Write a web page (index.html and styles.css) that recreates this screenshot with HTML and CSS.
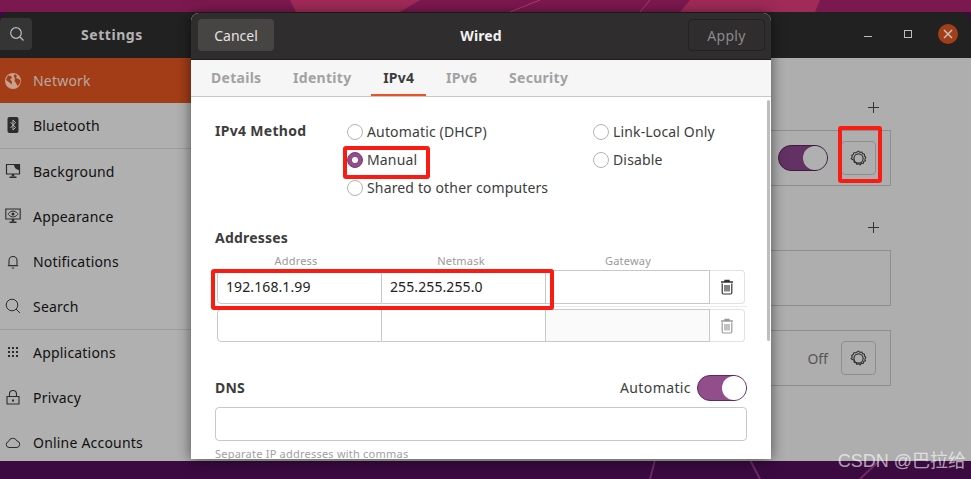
FILE: index.html
```html
<!DOCTYPE html>
<html lang="en">
<head>
<meta charset="utf-8">
<title>Settings - Wired</title>
<link rel="stylesheet" href="styles.css">
</head>
<body>
<svg width="0" height="0" class="defs">
  <symbol id="gear" viewBox="0 0 20 20">
    <circle cx="10" cy="10" r="5.400" fill="none" stroke="currentColor" stroke-width="1.400"/>
    <path d="M10 1.300l1.700 1.500 2.200-.5 1 2 2.200.6-.1 2.200 1.700 1.500-1.200 1.900.7 2.100-2 1-.6 2.200-2.200-.1-1.400 1.800-1.900-1.300-2.100.7-1-2-2.200-.6.1-2.200L1.300 10.400l1.300-1.900-.7-2.100 2-1 .6-2.200 2.200.1z" fill="none" stroke="currentColor" stroke-width="1.300" stroke-linejoin="round"/>
  </symbol>
  <symbol id="trash" viewBox="0 0 14 16">
    <path d="M1 3h12M5 3V1.500h4V3" fill="none" stroke="currentColor" stroke-width="1.400"/>
    <path d="M2.200 4.500v9.300c0 .8.500 1.200 1.200 1.200h7.200c.7 0 1.200-.4 1.200-1.200V4.500" fill="none" stroke="currentColor" stroke-width="1.200"/>
    <path d="M5 6v6.500M7 6v6.500M9 6v6.500" stroke="currentColor" stroke-width="1.200"/>
  </symbol>
  <symbol id="plus" viewBox="0 0 11 11">
    <path d="M5.500 0v11M0 5.500h11" stroke="currentColor" stroke-width="1"/>
  </symbol>
</svg>

<svg class="wallpaper" viewBox="0 0 971 479" preserveAspectRatio="none" aria-hidden="true">
  <rect width="971" height="12" fill="#7c1850"/>
  <path d="M290 0H420L400 12H296zM690 0H820L815 12H680z" fill="#a02a58"/>
  <path d="M540 0L510 12M650 0L640 12" stroke="#b23a68" stroke-width="1"/>
  <rect y="460" width="971" height="19" fill="#3a0a40"/>
  <path d="M650 479L655 460M760 479L750 460M860 479L880 460" stroke="#6a2a68" stroke-width="2"/>
</svg>

<section class="settings">
  <header class="settings-bar">
    <div class="bar-left">
      <button class="search-btn" type="button">
        <svg width="16" height="16" viewBox="0 0 16 16"><circle cx="7" cy="7" r="5.300" fill="none" stroke="currentColor" stroke-width="1.200"/><path d="M11 11l3.500 3.500" stroke="currentColor" stroke-width="1.200"/></svg>
      </button>
      <span class="bar-title">Settings</span>
    </div>
    <div class="win-controls">
      <span class="win-min"></span>
      <span class="win-max"></span>
      <span class="win-close">
        <svg width="10" height="10" viewBox="0 0 10 10"><path d="M1 1l8 8M9 1l-8 8" stroke="currentColor" stroke-width="1.500"/></svg>
      </span>
    </div>
  </header>
  <div class="settings-body">
    <nav class="sidebar">
      <a class="nav-row is-selected">
        <svg class="nav-icon" viewBox="0 0 16 16"><circle cx="8" cy="8" r="8" fill="currentColor"/><path d="M3 2.500l3 .5 1 2-2 1.500 2 2-.5 3L4 9 1 7zM10 1l2 2-1 2 3 1 1.500 2-1 3-2 2-1.500-3-1.500-2 .5-2.500-1.500-2.500z" fill="#a33d17"/></svg>
        <span>Network</span>
      </a>
      <a class="nav-row nav-group-end">
        <svg class="nav-icon" viewBox="0 0 16 16"><rect x="2.500" y="0" width="11" height="16" rx="2" fill="currentColor"/><path d="M5.500 5l5 5.500L8 13V3l2.500 2.500-5 5.500" fill="none" stroke="#b0b0b0" stroke-width="1"/></svg>
        <span>Bluetooth</span>
      </a>
      <a class="nav-row">
        <svg class="nav-icon" viewBox="0 0 16 16"><path d="M1.500 1.500h13v9.500h-13z" fill="none" stroke="currentColor" stroke-width="1.200"/><path d="M9 1.500h5.500V7C11.500 7 9 4.500 9 1.500zM6.800 11h2.400v2.200H6.800zM4.500 13.500h7V15h-7z" fill="currentColor"/></svg>
        <span>Background</span>
      </a>
      <a class="nav-row">
        <svg class="nav-icon" viewBox="0 0 16 16"><path d="M.800 1h14.400v10H.800z" fill="none" stroke="currentColor" stroke-width="1.100"/><path d="M3 6s2-3 5-3 5 3 5 3-2 3-5 3-5-3-5-3z" fill="none" stroke="currentColor"/><circle cx="8" cy="6" r="1.500" fill="currentColor"/><path d="M6.800 11h2.400v2.200H6.800zM4.500 13.500h7V15h-7z" fill="currentColor"/></svg>
        <span>Appearance</span>
      </a>
      <a class="nav-row">
        <svg class="nav-icon" viewBox="0 0 16 16"><path d="M4 11.500V6.500a4 4 0 0 1 8 0v5zM2.800 11.800h10.400M6.800 14h2.400" fill="none" stroke="currentColor" stroke-width="1.100"/></svg>
        <span>Notifications</span>
      </a>
      <a class="nav-row nav-group-end">
        <svg class="nav-icon" viewBox="0 0 16 16"><circle cx="7" cy="7" r="5.800" fill="none" stroke="currentColor" stroke-width="1"/><path d="M11 11l4 4" stroke="currentColor" stroke-width="1"/></svg>
        <span>Search</span>
      </a>
      <a class="nav-row">
        <svg class="nav-icon" viewBox="0 0 16 16" fill="currentColor"><rect x="3" y="3" width="2" height="2"/><rect x="7" y="3" width="2" height="2"/><rect x="11" y="3" width="2" height="2"/><rect x="3" y="7" width="2" height="2"/><rect x="7" y="7" width="2" height="2"/><rect x="11" y="7" width="2" height="2"/><rect x="3" y="11" width="2" height="2"/><rect x="7" y="11" width="2" height="2"/><rect x="11" y="11" width="2" height="2"/></svg>
        <span>Applications</span>
      </a>
      <a class="nav-row">
        <svg class="nav-icon" viewBox="0 0 16 16"><path d="M2 7.500h12V15H2zM4.500 7.500V5a3.500 3.500 0 0 1 7 0v2.500" fill="none" stroke="currentColor" stroke-width="1.100"/><rect x="7" y="10.500" width="2" height="2" fill="currentColor"/></svg>
        <span>Privacy</span>
      </a>
      <a class="nav-row">
        <svg class="nav-icon" viewBox="0 0 16 16"><path d="M4 12.500a3 3 0 0 1-.5-5.900 4.500 4.500 0 0 1 8.500-.6 3.300 3.300 0 0 1 0 6.500z" fill="none" stroke="currentColor" stroke-width="1"/></svg>
        <span>Online Accounts</span>
      </a>
    </nav>
    <main class="net-panel">
      <svg class="panel-add" width="11" height="11"><use href="#plus"/></svg>
      <div class="panel-card">
        <span class="dim-toggle"><span class="dim-thumb"></span></span>
        <span class="dim-gear"><svg width="17" height="17"><use href="#gear"/></svg></span>
      </div>
      <svg class="panel-add panel-add-second" width="11" height="11"><use href="#plus"/></svg>
      <div class="panel-card panel-card-empty"></div>
      <div class="panel-card">
        <span class="off-label">Off</span>
        <span class="dim-gear"><svg width="17" height="17"><use href="#gear"/></svg></span>
      </div>
    </main>
  </div>
</section>

<section class="dialog">
  <header class="dialog-bar">
    <button class="btn-cancel" type="button">Cancel</button>
    <span class="dialog-title">Wired</span>
    <button class="btn-apply" type="button">Apply</button>
  </header>
  <div class="tabs">
    <span class="tab">Details</span>
    <span class="tab">Identity</span>
    <span class="tab is-active">IPv4</span>
    <span class="tab">IPv6</span>
    <span class="tab">Security</span>
  </div>
  <div class="dialog-content">
    <div class="method">
      <div class="section-title method-title">IPv4 Method</div>
      <div class="radio-col">
        <label class="radio"><i class="dot"></i>Automatic (DHCP)</label>
        <label class="radio"><i class="dot is-on"></i>Manual</label>
        <label class="radio"><i class="dot"></i>Shared to other computers</label>
      </div>
      <div class="radio-col">
        <label class="radio"><i class="dot"></i>Link-Local Only</label>
        <label class="radio"><i class="dot"></i>Disable</label>
      </div>
    </div>

    <div class="section-title addr-title">Addresses</div>
    <div class="addr-heads">
      <span>Address</span><span>Netmask</span><span>Gateway</span>
    </div>
    <div class="addr-row">
      <span class="cell cell-first">192.168.1.99</span>
      <span class="cell">255.255.255.0</span>
      <span class="cell"></span>
      <span class="cell-del"><svg width="14" height="16"><use href="#trash"/></svg></span>
    </div>
    <div class="addr-sep"></div>
    <div class="addr-row">
      <span class="cell cell-first"></span>
      <span class="cell"></span>
      <span class="cell is-disabled"></span>
      <span class="cell-del is-faded"><svg width="14" height="16"><use href="#trash"/></svg></span>
    </div>

    <div class="dns-head">
      <span class="section-title">DNS</span>
      <span class="dns-auto"><span class="dns-auto-label">Automatic</span><span class="toggle"><span class="thumb"></span></span></span>
    </div>
    <div class="dns-input"></div>
    <div class="hint">Separate IP addresses with commas</div>
  </div>
  <div class="scrollbar"></div>
</section>

<div class="mark mark-gear"></div>
<div class="mark mark-manual"></div>
<div class="mark mark-addr"></div>
<div class="watermark">CSDN @巴拉给</div>
</body>
</html>
```
FILE: styles.css
```css
* { box-sizing: border-box; }
html, body { margin: 0; padding: 0; }
body {
  position: relative;
  width: 971px;
  height: 479px;
  overflow: hidden;
  background: #3a0a40;
  font-family: "Noto Sans", "Noto Sans CJK SC", sans-serif;
  font-size: 14px;
  color: #3d3d3d;
}
.defs { position: absolute; }
.wallpaper { position: absolute; left: 0; top: 0; width: 971px; height: 479px; }

/* settings window (dimmed behind the dialog) */
.settings {
  position: absolute;
  left: 0; top: 12px;
  width: 971px; height: 449px;
  border-radius: 10px 10px 0 0;
  overflow: hidden;
  display: flex;
  flex-direction: column;
}
.settings-bar {
  height: 46px;
  flex: none;
  padding-bottom: 2px;
  background: #222121;
  display: flex;
  justify-content: space-between;
  align-items: center;
}
.bar-left { display: flex; align-items: center; }
.search-btn {
  width: 32px; height: 32px;
  padding: 0 0 0 2px;
  border: 0;
  border-radius: 0 4px 4px 0;
  background: #353535;
  color: #bdbdbd;
  display: flex; align-items: center; justify-content: center;
}
.bar-title {
  margin-left: 49px;
  font-weight: 700;
  font-size: 14px;
  letter-spacing: .55px;
  color: #b4b4b4;
}
.win-controls { display: flex; align-items: center; }
.win-min { width: 8px; height: 1px; background: #bdbdbd; margin-top: 4px; margin-right: 32px; }
.win-max { width: 8px; height: 8px; border: 1px solid #bdbdbd; margin-right: 26px; }
.win-close {
  width: 20px; height: 20px;
  margin-right: 13px;
  border-radius: 50%;
  background: #a33f18;
  color: #c9c0bb;
  display: flex; align-items: center; justify-content: center;
}
.settings-body { flex: 1; display: flex; min-height: 0; }
.sidebar {
  width: 191px;
  flex: none;
  background: #b0b0b0;
  color: #111;
}
.nav-row {
  height: 45.250px;
  display: flex;
  align-items: center;
  gap: 12px;
  padding-left: 5px;
  font-size: 14px;
  letter-spacing: .2px;
}
.nav-row.nav-group-end { border-bottom: 1px solid #9c9c9c; }
.nav-row.is-selected { background: #a33d17; color: #b9a9a0; }
.nav-icon { width: 16px; height: 16px; flex: none; color: #2c2c2c; }
.is-selected .nav-icon { color: #c7a08e; }
.net-panel {
  flex: 1;
  background: #aeaeae;
  padding: 44px 80px 0 0;
  display: flex;
  flex-direction: column;
  align-items: flex-end;
}
.panel-add {
  flex: none;
  margin: 0 12px 17px 0;
  color: #333;
}
.panel-add-second { margin-top: 36px; }
.panel-card {
  width: 300px;
  height: 56px;
  flex: none;
  border: 1px solid #8e8e8e;
  display: flex;
  align-items: center;
  justify-content: flex-end;
  padding-right: 14px;
}
.panel-card-empty { margin-bottom: 24px; }
.dim-toggle {
  width: 50px; height: 26px;
  margin-right: 13px;
  border-radius: 13px;
  background: #633164;
  border: 1px solid #3d1c40;
  position: relative;
}
.dim-thumb {
  position: absolute;
  right: 0; top: 0;
  width: 24px; height: 24px;
  border-radius: 50%;
  background: #b0b0b0;
}
.dim-gear {
  width: 35px; height: 34px;
  border: 1px solid #8e8e8e;
  border-radius: 4px;
  color: #333;
  display: flex; align-items: center; justify-content: center;
}
.off-label { margin-right: 13px; color: #565656; font-size: 14px; }

/* dialog */
.dialog {
  position: absolute;
  left: 191px; top: 13px;
  width: 580px; height: 446px;
  border-radius: 8px 8px 0 0;
  overflow: hidden;
  background: #fff;
  box-shadow: 0 1px 14px rgba(0, 0, 0, .55);
}
.dialog-bar {
  height: 47px;
  background: #2f2d2d;
  border-bottom: 1px solid #1e1d1d;
  display: flex;
  justify-content: space-between;
  align-items: center;
  padding: 0 6px 2px 7px;
  position: relative;
}
.btn-cancel, .btn-apply {
  height: 32px;
  border-radius: 4px;
  font-family: inherit;
  font-size: 14px;
  padding: 0;
}
.btn-cancel { width: 76px; background: #474543; border: 0; color: #e2e2e2; }
.btn-apply { width: 77px; background: #2f2d2d; border: 1px solid #222; color: #8a8a8a; letter-spacing: .3px; }
.dialog-title {
  position: absolute;
  left: 0; right: 0;
  text-align: center;
  pointer-events: none;
  font-weight: 700;
  font-size: 14px;
  letter-spacing: .1px;
  color: #f2f2f2;
}
.tabs {
  height: 37px;
  background: #f6f6f6;
  border-bottom: 1px solid #c8c8c8;
  display: flex;
  padding-left: 8px;
  gap: 7.700px;
}
.tab {
  height: 36px;
  padding: 0 12px;
  line-height: 35px;
  font-size: 14px;
  font-weight: 700;
  letter-spacing: .28px;
  color: #a2a2a2;
}
.tab.is-active { color: #3d3d3d; border-bottom: 2px solid #e95420; }
.dialog-content { padding: 21px 24px 0 24px; }
.section-title { font-weight: 700; font-size: 14px; letter-spacing: .2px; color: #3d3d3d; line-height: 20px; }
.method { display: grid; grid-template-columns: 132px 246px 1fr; }
.method-title { line-height: 26px; letter-spacing: .3px; }
.radio {
  height: 28px;
  padding-bottom: 2px;
  display: flex;
  align-items: center;
  gap: 4px;
  font-size: 14px;
  letter-spacing: .15px;
}
.dot {
  width: 16px; height: 16px;
  margin-top: 2px;
  border-radius: 50%;
  border: 1px solid #b5b3b1;
  background: #fff;
}
.dot.is-on { background: #924d8b; border-color: #7a3d75; position: relative; }
.dot.is-on::after {
  content: "";
  position: absolute;
  left: 4px; top: 4px;
  width: 6px; height: 6px;
  border-radius: 50%;
  background: #fff;
}
.addr-title { margin-top: 26px; }
.addr-heads {
  display: grid;
  grid-template-columns: 158px 172px 162px;
  margin: 6px 0 2px 2px;
  text-align: center;
  font-size: 11px;
  letter-spacing: .2px;
  line-height: 14px;
  color: #9a9a9a;
}
.addr-row {
  display: grid;
  grid-template-columns: 165px 164px 164px 35px;
  height: 33px;
  margin-left: 2px;
  width: 528px;
}
.cell {
  border: 1px solid #c8c8c8;
  border-left-width: 0;
  padding-left: 8px;
  line-height: 32px;
  font-size: 14px;
  letter-spacing: .1px;
  color: #222;
}
.cell-first { border-left-width: 1px; border-radius: 4px 0 0 4px; }
.cell.is-disabled { background: #fafafa; }
.cell-del {
  border: 1px solid #e2e2e2;
  border-left: 0;
  border-radius: 0 4px 4px 0;
  color: #333;
  display: flex; align-items: center; justify-content: center;
}
.cell-del.is-faded { color: #999; }
.addr-sep { height: 1px; margin: 3px 0 2px 0; width: 532px; background: #ebebeb; }
.dns-head {
  margin-top: 33px;
  height: 26px;
  display: flex;
  justify-content: space-between;
  align-items: center;
  width: 532px;
}
.dns-auto { display: flex; align-items: center; gap: 6px; font-size: 14px; letter-spacing: .4px; }
.dns-auto-label { margin-bottom: 2px; }
.toggle {
  width: 50px; height: 26px;
  border-radius: 13px;
  background: #924d8b;
  border: 1px solid #5d2a5c;
  position: relative;
}
.thumb {
  position: absolute;
  right: 0; top: 0;
  width: 24px; height: 24px;
  border-radius: 50%;
  background: #fff;
}
.dns-input {
  margin-top: 6px;
  width: 532px; height: 34px;
  border: 1px solid #c8c8c8;
  border-radius: 4px;
}
.hint { margin-top: 5px; font-size: 11px; letter-spacing: .22px; line-height: 16px; color: #a0a0a0; }
.scrollbar {
  position: absolute;
  right: 1px; top: 87px;
  width: 3px; height: 241px;
  border-radius: 2px;
  background: #bdbdbd;
}

/* red annotations */
.mark {
  position: absolute;
  border: 4px solid #fa1c12;
  border-radius: 3px;
}
.mark-gear { left: 838px; top: 126px; width: 44px; height: 57px; }
.mark-manual { left: 343px; top: 146px; width: 87px; height: 33px; }
.mark-addr { left: 211px; top: 269px; width: 343px; height: 41px; }
.watermark {
  position: absolute;
  right: 5px; top: 448px;
  font-family: "Liberation Sans", "Noto Sans CJK SC", sans-serif;
  font-size: 18px;
  line-height: 26px;
  color: rgba(255, 255, 255, .62);
}
```
